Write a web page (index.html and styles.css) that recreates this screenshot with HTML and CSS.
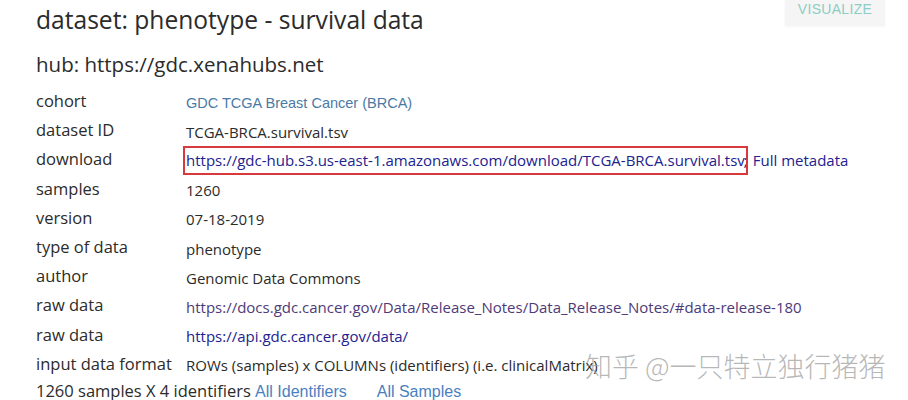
FILE: index.html
```html
<!DOCTYPE html>
<html>
<head>
<meta charset="utf-8">
<link rel="stylesheet" href="styles.css">
</head>
<body>
<div class="page">
  <div class="head">
    <h1 class="title">dataset: phenotype - survival data</h1>
    <button class="viz">VISUALIZE</button>
  </div>
  <h2 class="hub">hub: https://gdc.xenahubs.net</h2>
  <div class="meta">
    <div class="label">cohort</div>
    <div class="value"><a class="cohort">GDC TCGA Breast Cancer (BRCA)</a></div>
    <div class="label">dataset ID</div>
    <div class="value">TCGA-BRCA.survival.tsv</div>
    <div class="label">download</div>
    <div class="value"><span class="boxed"><a class="link">https://gdc-hub.s3.us-east-1.amazonaws.com/download/TCGA-BRCA.survival.tsv</a></span><span class="sep">;</span><a class="link">Full metadata</a></div>
    <div class="label">samples</div>
    <div class="value">1260</div>
    <div class="label">version</div>
    <div class="value">07-18-2019</div>
    <div class="label">type of data</div>
    <div class="value">phenotype</div>
    <div class="label">author</div>
    <div class="value">Genomic Data Commons</div>
    <div class="label">raw data</div>
    <div class="value"><a class="link visited">https://docs.gdc.cancer.gov/Data/Release_Notes/Data_Release_Notes/#data-release-180</a></div>
    <div class="label">raw data</div>
    <div class="value"><a class="link">https://api.gdc.cancer.gov/data/</a></div>
    <div class="label">input data format</div>
    <div class="value">ROWs (samples) x COLUMNs (identifiers) (i.e. clinicalMatrix)</div>
  </div>
  <div class="summary">1260 samples X 4 identifiers <a class="all">All Identifiers</a><a class="all gap">All Samples</a></div>
  <div class="watermark">知乎 @一只特立独行猪猪</div>
</div>
</body>
</html>
```
FILE: styles.css
```css
html, body {
  margin: 0;
  padding: 0;
  background: #fff;
}
.page {
  position: relative;
  width: 908px;
  height: 400px;
  overflow: hidden;
  padding-left: 36px;
  box-sizing: border-box;
  font-family: "Open Sans", "Noto Sans", sans-serif;
  color: #2b2b2b;
}
.head {
  display: flex;
  justify-content: space-between;
  align-items: flex-start;
  padding-right: 23px;
}
.title {
  margin: 0;
  padding-top: 4px;
  font-size: 24.6px;
  font-weight: 400;
  line-height: 32px;
  color: #2b2b2b;
}
.viz {
  border: none;
  background: #f5f5f5;
  color: #8ccdc6;
  font-family: "Liberation Sans", Arial, sans-serif;
  font-size: 14px;
  letter-spacing: 0.3px;
  width: 100px;
  height: 26px;
  padding: 0 0 8px 0;
  margin: 0;
  line-height: 18px;
  box-shadow: 0 1px 2px rgba(0,0,0,0.04);
}
.hub {
  margin: 14px 0 0 0;
  font-size: 20.5px;
  font-weight: 400;
  line-height: 28px;
  color: #2b2b2b;
}
.meta {
  display: grid;
  grid-template-columns: 150px 1fr;
  grid-auto-rows: 29.2px;
  margin-top: 10px;
  align-items: center;
}
.label {
  font-size: 16.5px;
  line-height: 22px;
  color: #2b2b2b;
  padding-bottom: 3px;
}
.value {
  font-size: 15px;
  line-height: 20px;
  color: #2b2b2b;
  white-space: nowrap;
}
.cohort {
  font-family: "Liberation Sans", Arial, sans-serif;
  color: #4a7aa5;
  font-size: 14.5px;
}
.boxed {
  display: inline-block;
  border: 2px solid #d8393c;
  padding: 2px 1px 3px 1px;
  margin-left: -3px;
  position: relative;
  z-index: 1;
}
.link {
  color: #22228f;
}
.visited {
  color: #4e3a78;
}
.sep {
  color: #22228f;
  margin-left: -4px;
  margin-right: 5px;
}
.summary {
  font-size: 16.5px;
  line-height: 22px;
  color: #2b2b2b;
  white-space: nowrap;
}
.all {
  font-family: "Liberation Sans", Arial, sans-serif;
  color: #4a7fc0;
  font-size: 16px;
}
.gap {
  margin-left: 30px;
}
.watermark {
  position: absolute;
  left: 585px;
  top: 346px;
  font-family: "Noto Sans CJK SC", sans-serif;
  font-size: 27px;
  font-weight: 300;
  color: rgba(160,160,160,0.75);
  white-space: nowrap;
}
```
